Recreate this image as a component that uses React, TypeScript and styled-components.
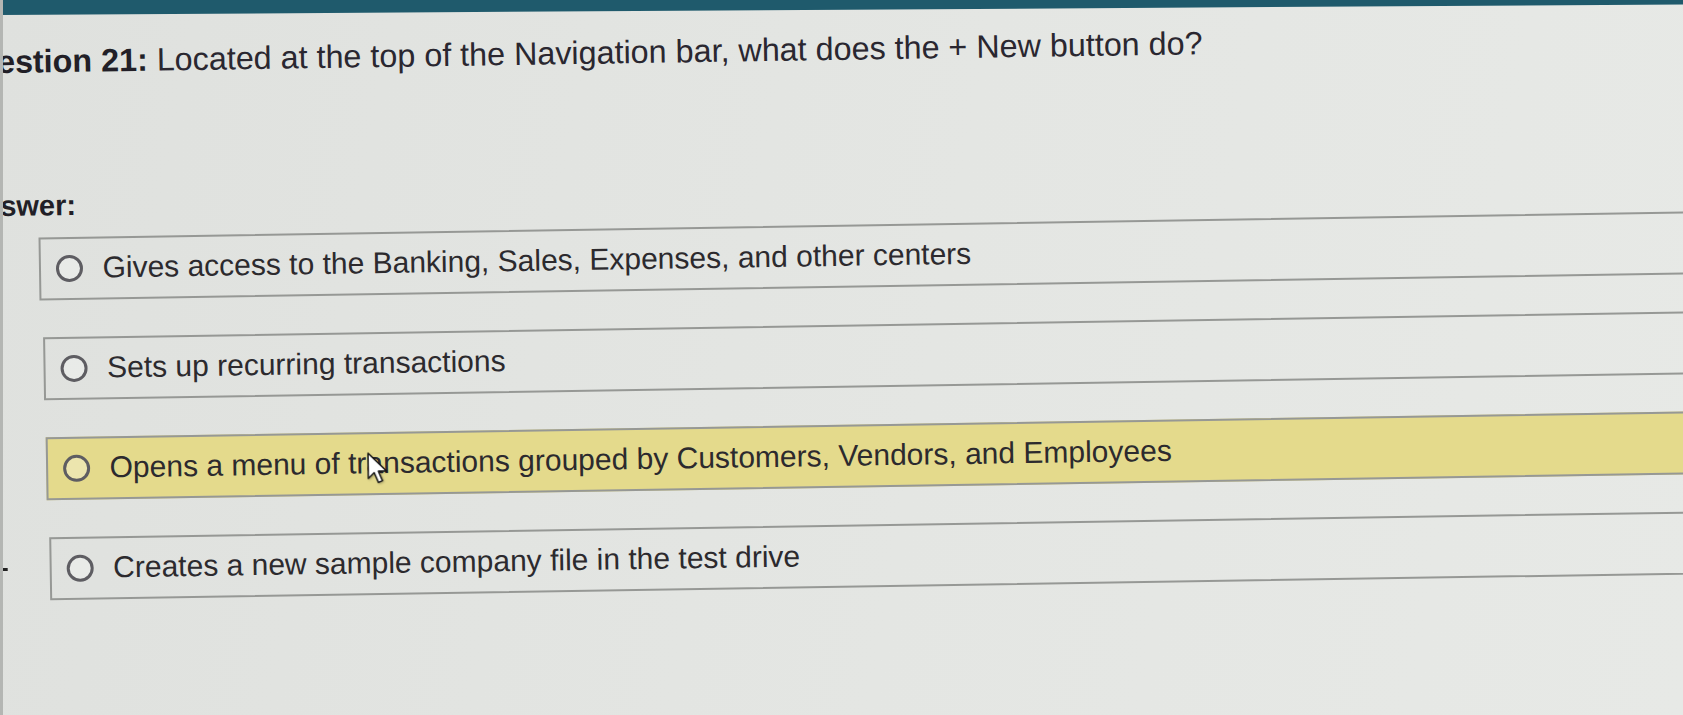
import styled, { createGlobalStyle } from "styled-components";

const GlobalStyle = createGlobalStyle`
    html, body {
        margin: 0;
        padding: 0;
        overflow: hidden;
        background: linear-gradient(100deg, #dfe1de 0%, #e4e6e3 55%, #e7e9e6 100%);
    }
    body {
        font-family: "Liberation Sans", Arial, sans-serif;
        color: #2a2730;
    }
`;

interface RowProps {
    $indent: number
    $selected?: boolean
}

const Page = styled.div`
    position: relative;
    width: 100vw;
    height: 100vh;
    overflow: hidden;

    &::after {
        content: "";
        position: absolute;
        top: 0;
        bottom: 0;
        left: 0;
        width: 3px;
        background: #b4b6b3;
    }
`;

const TopBar = styled.div`
    height: 15px;
    background: #1f5a6c;
    clip-path: polygon(0 0, 100% 0, 100% 30%, 0 100%);
`;

// the photo is taken at a slight angle, so the whole sheet is tilted
const Sheet = styled.div`
    display: flex;
    flex-direction: column;
    padding-top: 31px;
    transform: rotate(-0.9deg);
    transform-origin: 0 0;
`;

const Question = styled.div`
    margin-left: -48.6px;
    font-size: 32.3px;
    line-height: 1;
    white-space: nowrap;
    color: #2a2730;

    b {
        font-weight: 700;
        color: #221f27;
    }
`;

const AnswerLabel = styled.div`
    margin-top: 114px;
    margin-left: -41.4px;
    font-size: 29px;
    font-weight: 700;
    line-height: 1;
    color: #221f27;
`;

const OptionList = styled.div`
    display: flex;
    flex-direction: column;
    gap: 37px;
    margin-top: 16.6px;
    margin-right: -120px;
`;

const OptionRow = styled.div<RowProps>`
    position: relative;
    display: flex;
    align-items: center;
    box-sizing: border-box;
    height: 63px;
    margin-left: ${ ({ $indent }) => $indent }px;
    padding-left: 15px;
    border: 2px solid #969895;
    background: ${ ({ $selected }) => $selected ? "#e4da8c" : "transparent" };
`;

const Radio = styled.span`
    flex-shrink: 0;
    box-sizing: border-box;
    width: 27px;
    height: 27px;
    margin-right: 19.5px;
    border: 3px solid #5e5d62;
    border-radius: 50%;
    background: rgba(255, 255, 255, 0.3);
`;

const OptionText = styled.span`
    font-size: 30px;
    line-height: 1;
    white-space: nowrap;
    color: #2c2a2e;
`;

const CursorSpot = styled.span`
    position: relative;
    display: inline-block;
    width: 0;

    svg {
        position: absolute;
        top: -21px;
        left: 1px;
        filter: drop-shadow(1px 1px 1px rgba(0, 0, 0, 0.25));
    }
`;

const Marker = styled.span`
    position: absolute;
    left: -50px;
    top: calc(50% - 1px);
    width: 6px;
    height: 3px;
    background: #222;
`;

const Cursor = () => (
    <svg width="21" height="32" viewBox="0 0 13 20">
        <path
            d="M0.6 0.6 V16.4 L4.3 12.8 L6.9 19 L9.4 17.9 L6.9 11.9 H12 Z"
            fill="#fff"
            stroke="#111"
            strokeWidth="0.9"
            strokeLinejoin="round"
        />
    </svg>
);

export default function App() {
    return (
        <Page>
            <GlobalStyle />
            <TopBar />
            <Sheet>
                <Question>
                    <b>Question 21:</b> Located at the top of the Navigation bar, what does the + New button do?
                </Question>
                <AnswerLabel>Answer:</AnswerLabel>
                <OptionList>
                    <OptionRow $indent={ 35 }>
                        <Radio />
                        <OptionText>Gives access to the Banking, Sales, Expenses, and other centers</OptionText>
                    </OptionRow>
                    <OptionRow $indent={ 38 }>
                        <Radio />
                        <OptionText>Sets up recurring transactions</OptionText>
                    </OptionRow>
                    <OptionRow $indent={ 39 } $selected>
                        <Radio />
                        <OptionText>
                            Opens a menu of tr<CursorSpot><Cursor /></CursorSpot>ansactions grouped by Customers, Vendors, and Employees
                        </OptionText>
                    </OptionRow>
                    <OptionRow $indent={ 41 }>
                        <Marker />
                        <Radio />
                        <OptionText>Creates a new sample company file in the test drive</OptionText>
                    </OptionRow>
                </OptionList>
            </Sheet>
        </Page>
    );
}
